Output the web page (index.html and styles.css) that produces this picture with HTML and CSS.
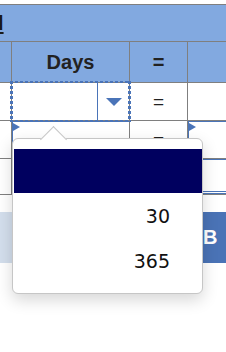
FILE: index.html
```html
<!DOCTYPE html>
<html lang="en">
<head>
    <meta charset="UTF-8">
    <title>Days picker</title>
    <link rel="stylesheet" href="styles.css">
</head>
<body>

    <div class="sheet">
        <div class="title-bar"><span class="title">l</span></div>

        <div class="row head">
            <div class="cell c0"></div>
            <div class="cell c1">Days</div>
            <div class="cell c2">=</div>
            <div class="cell c3"></div>
        </div>

        <div class="row entry">
            <div class="cell c0"></div>
            <div class="cell c1 focus">
                <div class="select-box"></div>
                <div class="select-btn"><span class="caret"></span></div>
            </div>
            <div class="cell c2">=</div>
            <div class="cell c3"></div>
        </div>

        <div class="row entry">
            <div class="cell c0"></div>
            <div class="cell c1 marked"><span class="flag"></span></div>
            <div class="cell c2">=</div>
            <div class="cell c3 marked"><span class="flag"></span></div>
        </div>

        <div class="row entry last">
            <div class="cell c0"></div>
            <div class="cell c1"></div>
            <div class="cell c2"></div>
            <div class="cell c3 marked-top"></div>
        </div>

        <div class="band">
            <div class="band-light"></div>
            <div class="band-dark">B</div>
        </div>
    </div>

    <div class="picker">
        <span class="picker-arrow"></span>
        <div class="option selected"></div>
        <div class="option">30</div>
        <div class="option">365</div>
    </div>

</body>
</html>
```

FILE: styles.css
```css
body {
    margin: 0;
    padding: 0;
    background: #fff;
    font-family: "Liberation Sans", Arial, sans-serif;
    overflow: hidden;
    position: relative;
    height: 352px;
}

.sheet {
    margin-top: 4px;
    border-top: 1px solid #7f7f7f;
}

.title-bar {
    height: 36px;
    background: #82a9e0;
    border-bottom: 1px solid #7f7f7f;
    display: flex;
    align-items: center;
}

.title {
    margin-left: -2px;
    font-weight: bold;
    font-size: 20px;
    color: #1a1a1a;
    text-decoration: underline;
    text-underline-offset: 2px;
}

.row {
    display: flex;
    border-bottom: 1px solid #7f7f7f;
}

.head {
    height: 40px;
    background: #82a9e0;
}

.entry {
    height: 37px;
}

.cell {
    box-sizing: border-box;
    border-right: 1px solid #7f7f7f;
    display: flex;
    align-items: center;
    justify-content: center;
    position: relative;
}

.c0 { width: 12px; }
.c1 { width: 118px; }
.c2 { width: 58px; }
.c3 { flex: 1; border-right: none; }

.head .c1,
.head .c2 {
    font-weight: bold;
    font-size: 20px;
    color: #222;
}

.entry .c2 {
    font-size: 19px;
    color: #222;
}

.focus {
    justify-content: flex-start;
    align-items: stretch;
}

/* dotted focus ring, square dots like the sheet app draws */
.focus::after {
    content: "";
    position: absolute;
    left: -2px;
    top: -2px;
    right: -2px;
    bottom: -2px;
    z-index: 1;
    background:
        repeating-linear-gradient(90deg, #4a74b8 0 3px, transparent 3px 5px) top / 100% 2px no-repeat,
        repeating-linear-gradient(90deg, #4a74b8 0 3px, transparent 3px 5px) bottom / 100% 2px no-repeat,
        repeating-linear-gradient(180deg, #4a74b8 0 3px, transparent 3px 5px) left / 3px 100% no-repeat,
        repeating-linear-gradient(180deg, #4a74b8 0 3px, transparent 3px 5px) right / 3px 100% no-repeat;
}

.select-box {
    width: 85px;
    border-right: 1px solid #4a74b8;
}

.select-btn {
    flex: 1;
    display: flex;
    align-items: center;
    justify-content: center;
}

.caret {
    width: 0;
    height: 0;
    border-left: 8px solid transparent;
    border-right: 8px solid transparent;
    border-top: 8px solid #4a74b8;
    margin-top: 1px;
}

.marked {
    border-top: 1px solid #4a74b8;
    box-shadow: inset 1px 0 0 #4a74b8;
}

.marked-top {
    border-top: 1px solid #4a74b8;
    border-bottom: 3px double #4a74b8;
}

.flag {
    position: absolute;
    top: 1px;
    left: 1px;
    width: 0;
    height: 0;
    border-top: 4px solid transparent;
    border-bottom: 4px solid transparent;
    border-left: 7px solid #4a74b8;
}

.last {
    height: 35px;
}

.band {
    margin-top: 17px;
    height: 51px;
    display: flex;
}

.band-light {
    flex: 1;
    background: #d3deec;
}

.band-dark {
    width: 23px;
    background: #4a73b6;
    color: #fff;
    font-weight: bold;
    font-size: 20px;
    display: flex;
    align-items: center;
    padding-left: 2px;
}

.picker {
    position: absolute;
    left: 12px;
    top: 138px;
    width: 191px;
    box-sizing: border-box;
    padding: 10px 0 10px 1px;
    background: #fff;
    border: 1px solid #c6c6c6;
    border-radius: 6px;
    box-shadow: 0 6px 16px rgba(0, 0, 0, 0.16);
    z-index: 2;
}

.picker-arrow {
    position: absolute;
    left: 31px;
    top: -9px;
    width: 18px;
    height: 18px;
    background: #fff;
    border-left: 1px solid #c6c6c6;
    border-top: 1px solid #c6c6c6;
    transform: rotate(45deg);
}

.option {
    position: relative;
    height: 45px;
    box-sizing: border-box;
    padding-right: 32px;
    display: flex;
    align-items: center;
    justify-content: flex-end;
    font-family: "DejaVu Sans", sans-serif;
    font-size: 19px;
    color: #111;
}

.option.selected {
    height: 44px;
    background: #00005f;
}
```
